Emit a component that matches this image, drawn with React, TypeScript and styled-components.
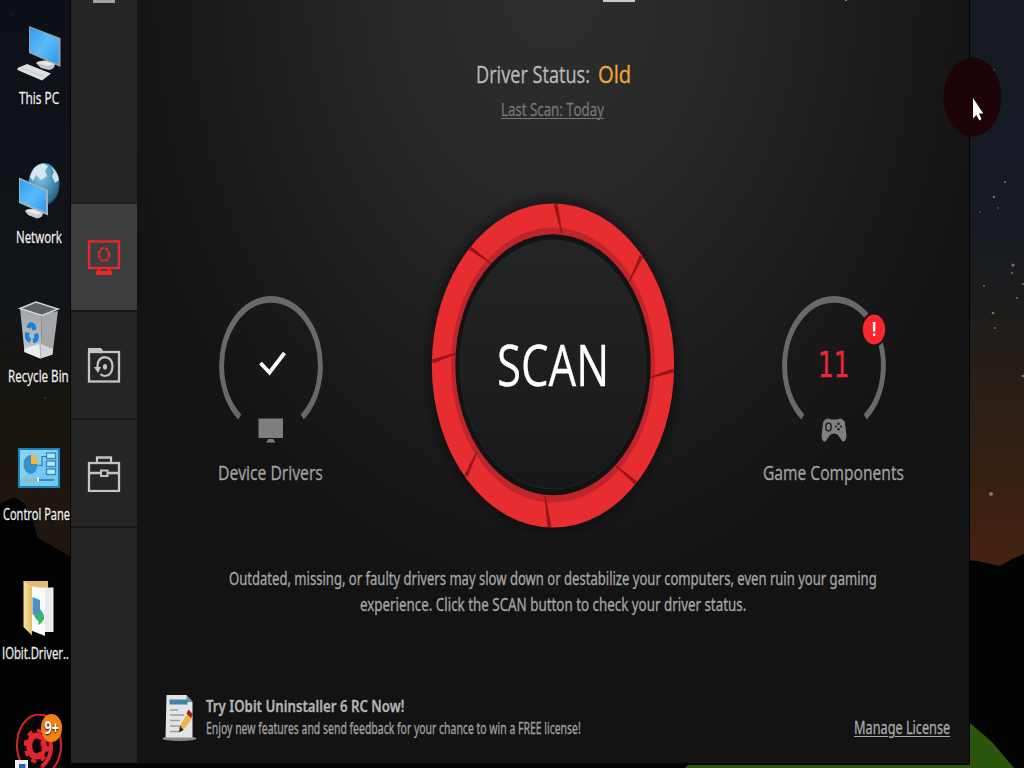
import React, { useLayoutEffect, useRef, useState } from "react";
import styled, { createGlobalStyle } from "styled-components";

const Global = createGlobalStyle`
  html, body { margin: 0; padding: 0; background: #000; overflow: hidden; }
  * { box-sizing: border-box; }
`;

const segoe = `"Open Sans", "Noto Sans", sans-serif`;
const tahoma = `"Noto Sans", "Open Sans", sans-serif`;
const verdana = `"DejaVu Sans", sans-serif`;

/* ---------- condensed text ---------- */

const FitBox = styled.span<{ $width: number; $size: number; $line: number; $color: string; $font?: string; $weight?: number }>`
  display: block;
  flex: none;
  width: ${(p) => p.$width}px;
  height: ${(p) => p.$line}px;
  line-height: ${(p) => p.$line}px;
  font-size: ${(p) => p.$size}px;
  font-family: ${(p) => p.$font || segoe};
  font-weight: ${(p) => p.$weight || 400};
  color: ${(p) => p.$color};
  -webkit-text-stroke: 0.3px currentColor;
  white-space: nowrap;
`;

const FitInner = styled.span<{ $underline?: boolean }>`
  display: inline-block;
  transform-origin: 0 50%;
  text-decoration: ${(p) => (p.$underline ? "underline" : "none")};
  text-decoration-thickness: 1px;
  text-underline-offset: 2px;
`;

type FitProps = {
  width: number;
  size: number;
  line: number;
  color: string;
  font?: string;
  weight?: number;
  underline?: boolean;
  children: string;
};

function Fit({ width, size, line, color, font, weight, underline, children }: FitProps) {
  const ref = useRef<HTMLSpanElement>(null);
  const [scale, setScale] = useState(0.75);
  useLayoutEffect(() => {
    if (ref.current) setScale(width / ref.current.offsetWidth);
  }, [width, children]);
  return (
    <FitBox $width={width} $size={size} $line={line} $color={color} $font={font} $weight={weight}>
      <FitInner ref={ref} $underline={underline} style={{ transform: `scaleX(${scale})` }}>
        {children}
      </FitInner>
    </FitBox>
  );
}

/* ---------- desktop ---------- */

const Desktop = styled.div`
  position: relative;
  width: 1024px;
  height: 768px;
  overflow: hidden;
  display: flex;
  background: #000;
`;

const Wallpaper = styled.svg`
  position: absolute;
  inset: 0;
`;

const IconColumn = styled.div`
  position: relative;
  width: 70px;
  height: 768px;
  flex: none;
  padding-top: 20px;
  overflow: hidden;
`;

const Shortcut = styled.div`
  height: 138.75px;
  width: 78px;
  display: flex;
  flex-direction: column;
  text-shadow: 0 1px 2px #000;
`;

const ShortcutLabel = styled.div<{ $left: number }>`
  padding-left: ${(p) => p.$left}px;
`;

const ShortcutArt = styled.svg`
  display: block;
  flex: none;
  width: 78px;
  height: 67px;
`;

const shortcutDefs = (
  <defs>
    <linearGradient id="screen" x1="0" y1="0" x2="1" y2="1">
      <stop offset="0" stopColor="#2f9df0" />
      <stop offset=".5" stopColor="#5bbcfb" />
      <stop offset="1" stopColor="#2b97ee" />
    </linearGradient>
    <radialGradient id="globe" cx=".4" cy=".3" r=".8">
      <stop offset="0" stopColor="#8cc7de" />
      <stop offset=".6" stopColor="#3d87a8" />
      <stop offset="1" stopColor="#1d4d68" />
    </radialGradient>
    <linearGradient id="binL" x1="0" y1="0" x2="0" y2="1">
      <stop offset="0" stopColor="#a2a5a8" />
      <stop offset=".7" stopColor="#b9bcc0" />
      <stop offset="1" stopColor="#e4e5e7" />
    </linearGradient>
    <linearGradient id="folder" x1="0" y1="0" x2="1" y2="0">
      <stop offset="0" stopColor="#f7e3a4" />
      <stop offset="1" stopColor="#e2bf66" />
    </linearGradient>
  </defs>
);

const ThisPcArt = () => (
  <ShortcutArt viewBox="0 0 78 67">
    {shortcutDefs}
    <path d="M29 6 L60.500 18 V47 L29 33Z" fill="#8fa3b0" />
    <path d="M30 7.500 L58.500 19 V44 L30 32Z" fill="url(#screen)" />
    <path d="M36 43 Q38 40 46 40.500 L55 44 Q55 49 49 50 L41 48Z" fill="#c3c6c9" />
    <path d="M36 43 L46 41 L54 44 L48 46Z" fill="#e6e7e9" />
    <path d="M17.500 48 L27 44 L51 53.500 L42 60.500 L17.500 50Z" fill="#dcdee0" />
    <path d="M22 48 L45 57" stroke="#c6c9cc" strokeWidth="1" />
  </ShortcutArt>
);

const NetworkArt = () => (
  <ShortcutArt viewBox="0 0 78 67">
    <ellipse cx="44" cy="25" rx="15.500" ry="21" fill="url(#globe)" />
    <path d="M30 18 Q33 6 43 4.500 L48 7 L45 12 L47 17 L41 21 L36 16 L33 22Z" fill="#d5e7ee" />
    <path d="M51 8 Q58 13 59 21 L55 24 L52 17 L54 13Z" fill="#cfe4ec" />
    <path d="M19 18.500 L48 31 V56.500 L19 44Z" fill="#9fb3bf" />
    <path d="M20 20.500 L46 32 V53 L20 42.500Z" fill="url(#screen)" />
    <path d="M25 52 Q27 49 34 50 L43 54 Q43 58.500 37 59.500 L28 56Z" fill="#c9cbce" />
    <path d="M26 52 L34 50.500 L42 54 L36 55.500Z" fill="#ececee" />
  </ShortcutArt>
);

const RecycleArt = () => (
  <ShortcutArt viewBox="0 0 78 67">
    <path d="M20 10.500 L42 16 L40.500 60.500 L24.500 54Z" fill="url(#binL)" />
    <path d="M42 16 L58 13 L52.500 56.500 L40.500 60.500Z" fill="#a4a6a9" />
    <path d="M24.300 51 L39 46 L40.500 60.500 L24.500 54Z" fill="#ebeced" />
    <path d="M41 46 L53 51 L52.500 56.500 L40.500 60.500Z" fill="#d2d4d6" />
    <path d="M20 10.500 L36 4 L58 11 L42 17.500Z" fill="#5d6062" stroke="#d2d4d6" strokeWidth="1.500" />
    <g fill="none" stroke="#1a80d8" strokeWidth="4.500">
      <path d="M28.500 30 Q30 24 33.500 28 L34.500 32" />
      <path d="M36 35.500 Q38 42.500 33 43" />
      <path d="M30.500 42.500 Q25.500 41 27.500 34.500" />
    </g>
  </ShortcutArt>
);

const ControlArt = () => (
  <ShortcutArt viewBox="0 0 78 67">
    <rect x="18" y="12" width="42" height="40" fill="#1f7fb8" />
    <rect x="20" y="14" width="38" height="36" fill="#72c8f2" />
    <path d="M20 14 H58 L20 44Z" fill="#92d8f7" opacity=".6" />
    <ellipse cx="30.500" cy="28.500" rx="7" ry="9.500" fill="#3c8ec6" />
    <path d="M31 28 V18 Q38 20 38 28Z" fill="#f5b43c" />
    <path d="M38 29.500 H42 V20.500 H46" fill="none" stroke="#2f7fae" strokeWidth="1.200" />
    <g fill="#b2e6fb" stroke="#2f86b8" strokeWidth="1.300">
      <rect x="46.500" y="17" width="9" height="5.500" />
      <rect x="46.500" y="25" width="9" height="5.500" />
      <rect x="46.500" y="33" width="9" height="5.500" />
    </g>
    <path d="M24 44 H36" stroke="#b6b377" strokeWidth="2" />
    <path d="M36.500 44 H54" stroke="#3588b7" strokeWidth="2" />
    <rect x="37" y="41.500" width="2" height="4" fill="#e9f8ff" />
  </ShortcutArt>
);

const FolderArt = () => (
  <ShortcutArt viewBox="0 0 78 67">
    <path d="M23.500 6 H48 V50 H32Z" fill="#dfbf6c" />
    <path d="M38 12.500 H53.500 V57 H38Z" fill="#e9eaec" />
    <path d="M31 11 L45 14 V61 L30 55Z" fill="#fafafa" />
    <path d="M32.500 22 L40 25 V43 L32.500 39Z" fill="#4b93c4" />
    <path d="M33 35 Q36 42 40 41 V34 Q45 40 44 44 Q42 48 38.500 50 V46 Q34 44 33 35Z" fill="#38b76a" />
    <path d="M23.500 6 L32 12 V60.500 L23.500 52Z" fill="url(#folder)" />
  </ShortcutArt>
);

const BoosterArt = () => (
  <ShortcutArt viewBox="0 0 78 67">
    <ellipse cx="39" cy="31" rx="22" ry="30.500" fill="#0b0606" stroke="#d8232b" strokeWidth="2" />
    <g fill="none" stroke="#e0272f">
      <ellipse cx="36.500" cy="32" rx="7.300" ry="10.500" strokeWidth="6" />
      <ellipse cx="36.500" cy="32" rx="11" ry="15.500" strokeWidth="3.500" strokeDasharray="5.500 5" />
      <path d="M50 26 Q54 42 41.500 53" strokeWidth="4" />
    </g>
    <path d="M41 27.500 Q36.500 24 34.500 31 Q35 39 40.500 36.500 V32" fill="none" stroke="#0b0606" strokeWidth="2.200" />
    <ellipse cx="51.500" cy="14" rx="10.500" ry="14" fill="#f47f12" />
    <text x="44.500" y="20" textLength="14.500" lengthAdjust="spacingAndGlyphs" fontFamily="Open Sans, sans-serif" fontWeight="700" fontSize="17" fill="#fff">9+</text>
    <rect x="15" y="46" width="13" height="20" fill="#f2f2f2" />
    <path d="M19 58 V50 H25.500 V58Z" fill="#2860b0" />
  </ShortcutArt>
);

/* ---------- application window ---------- */

const AppWindow = styled.div`
  position: relative;
  flex: none;
  width: 900px;
  height: 765px;
  display: flex;
  border: solid #050505;
  border-width: 0 1px 2px 1px;
`;

const Sidebar = styled.div`
  width: 66px;
  flex: none;
  display: flex;
  flex-direction: column;
  background: #252525;
`;

const SidebarTop = styled.div`
  height: 202px;
  padding-left: 22px;
`;

const MenuStub = styled.div`
  width: 22px;
  height: 3px;
  background: #a3a3a3;
`;

const NavItem = styled.div<{ $active?: boolean }>`
  height: 108px;
  display: flex;
  align-items: center;
  justify-content: center;
  border-top: 2px solid ${(p) => (p.$active ? "#1d1d1d" : "#171717")};
  background: ${(p) => (p.$active ? "#3e3e3e" : "#252525")};
`;

const SidebarRest = styled.div`
  flex: 1;
  border-top: 2px solid #171717;
`;

const Main = styled.div`
  flex: 1;
  display: flex;
  flex-direction: column;
  background: radial-gradient(ellipse 460px 640px at 50% -20px, #2e2e2e 0%, #282828 35%, #1b1b1b 72%, #131313 100%);
`;

const Header = styled.div`
  height: 190px;
  display: flex;
  flex-direction: column;
  align-items: center;
`;

const TopBar = styled.div`
  width: 100%;
  height: 59px;
  display: flex;
  padding-left: 466px;
`;

const TabMark = styled.div`
  width: 32px;
  height: 2px;
  background: #c9c9c9;
`;

const TopTick = styled.div`
  width: 2px;
  height: 1px;
  margin-left: 210px;
  background: #8a8a8a;
`;

const StatusLine = styled.div`
  display: flex;
  gap: 8px;
  margin-bottom: 8px;
`;

const LastScan = styled.div`
  padding-right: 2px;
`;

const Stage = styled.div`
  height: 350px;
  display: grid;
  grid-template-columns: 269px 294px 269px;
`;

const Dial = styled.div`
  display: grid;
  place-items: center;
  > * { grid-area: 1 / 1; }
`;

const ScanLabel = styled.div`
  padding-bottom: 3px;
`;

const Gauge = styled.div`
  display: flex;
  flex-direction: column;
  align-items: center;
  padding: 100px 2px 0 0;
`;

const GaugeFace = styled.div`
  display: grid;
  justify-items: center;
  > * { grid-area: 1 / 1; }
`;

const GaugeCount = styled.div`
  padding-top: 54px;
`;

const Description = styled.div`
  height: 150px;
  padding: 26px 1px 0 0;
  display: flex;
  flex-direction: column;
  align-items: center;
`;

const Footer = styled.div`
  flex: 1;
  display: flex;
  padding: 4px 19px 0 25px;
`;

const NoteArt = styled.svg`
  flex: none;
  width: 36px;
  height: 50px;
`;

const Promo = styled.div`
  flex: 1;
  margin-left: 8px;
`;

const ManageLink = styled.div`
  padding-top: 21px;
`;

const Pointer = styled.svg`
  position: absolute;
  left: 940px;
  top: 54px;
`;

const wedges = [
  [555.5, 204, 562, 234],
  [641.5, 256, 629.5, 281],
  [674, 370.5, 650, 377.500],
  [636, 483, 616, 466],
  [549.5, 527, 545, 496],
  [466, 476, 477, 451.500],
  [432.5, 361.5, 455.5, 353.500],
  [470, 248, 490.500, 263],
];

function ScanRing() {
  return (
    <svg width="294" height="350" viewBox="406 190 294 350">
      <defs>
        <linearGradient id="face" x1="0" y1="0" x2="0" y2="1">
          <stop offset="0" stopColor="#242525" />
          <stop offset="1" stopColor="#181818" />
        </linearGradient>
        <radialGradient id="halo">
          <stop offset=".88" stopColor="#0c0c0c" stopOpacity=".75" />
          <stop offset="1" stopColor="#0c0c0c" stopOpacity="0" />
        </radialGradient>
        <clipPath id="ring">
          <ellipse cx="553" cy="365.500" rx="121.200" ry="162" />
        </clipPath>
      </defs>
      <ellipse cx="553" cy="365.500" rx="132" ry="176" fill="url(#halo)" />
      <g clipPath="url(#ring)">
        <rect x="430" y="200" width="246" height="330" fill="#e82d30" />
        <ellipse cx="553" cy="365" rx="102" ry="137.500" fill="#bf252a" />
        {wedges.map(([ox, oy, ix, iy], i) => {
          const len = Math.hypot(ix - ox, iy - oy);
          const nx = (-(iy - oy) / len) * 2;
          const ny = ((ix - ox) / len) * 2;
          return <polygon key={i} points={`${ox + nx},${oy + ny} ${ox - nx},${oy - ny} ${ix - nx / 3},${iy - ny / 3} ${ix + nx / 3},${iy + ny / 3}`} fill="#9a1519" />;
        })}
      </g>
      <ellipse cx="553" cy="364.800" rx="97.700" ry="130.500" fill="#121313" />
      <ellipse cx="553" cy="364.500" rx="93" ry="124.500" fill="url(#face)" stroke="#222425" strokeWidth="1" />
    </svg>
  );
}

const GaugeArc = () => (
  <g transform="translate(55 76) scale(.745 1)" fill="none" stroke="#696969" strokeWidth="6.600">
    <path d="M-42 51 A66.300 66.300 0 1 1 42 51" />
  </g>
);

function DeviceGauge() {
  return (
    <svg width="110" height="160" viewBox="0 0 110 160">
      <GaugeArc />
      <path d="M44.500 73 L53.500 82.500 L68.500 63" fill="none" stroke="#fff" strokeWidth="3.800" />
      <rect x="42.500" y="128.500" width="24.500" height="19.500" fill="#7e7e7e" />
      <path d="M52.500 149 H57 L59.500 152.500 H50Z" fill="#7e7e7e" />
    </svg>
  );
}

function GameGauge() {
  return (
    <svg width="110" height="160" viewBox="0 0 110 160">
      <GaugeArc />
      <ellipse cx="95" cy="39.500" rx="13" ry="17.500" fill="#161616" />
      <ellipse cx="95" cy="39.500" rx="11.200" ry="15" fill="#f9262e" />
      <path d="M93.800 32 H96.500 L96.300 41.500 H94Z M94 43.500 H96.300 V46 H94Z" fill="#fff" />
      <path d="M44 133 Q45 129 49 128.500 L52 129.500 H58 L61 128.500 Q65 129 66 133 L67.500 146 Q67 152 63.500 151.500 L59 145 Q55 142 51 145 L46.500 151.500 Q43 152 42.500 146Z" fill="#808080" />
      <ellipse cx="49.500" cy="137" rx="2.700" ry="3.900" fill="none" stroke="#222" strokeWidth="1.500" />
      <g fill="#222">
        <circle cx="59.500" cy="133.800" r="1.300" />
        <circle cx="59.500" cy="139.200" r="1.300" />
        <circle cx="57" cy="136.500" r="1.100" />
        <circle cx="62" cy="136.500" r="1.100" />
      </g>
    </svg>
  );
}

function MonitorIcon() {
  return (
    <svg width="34" height="38" viewBox="0 0 34 38" fill="none" stroke="#e2292e">
      <rect x="2" y="3.500" width="30" height="26.500" strokeWidth="2.400" />
      <path d="M9 33 H25 V37 H9Z" fill="#e2292e" stroke="none" />
      <path d="M12 30.500 V34 M22 30.500 V34" strokeWidth="3" />
      <ellipse cx="17" cy="16.500" rx="5" ry="6.500" strokeWidth="2.200" strokeDasharray="3.700 0.860" />
    </svg>
  );
}

function RestoreIcon() {
  return (
    <svg width="34" height="38" viewBox="0 0 34 38" fill="none" stroke="#c4c4c4">
      <rect x="2" y="6" width="30" height="29.500" strokeWidth="2.300" />
      <path d="M1 4 H13 L15 6.500" strokeWidth="4" />
      <path d="M10.500 22 Q10 11.500 18 11.200 Q25.500 12 25.500 20.500 Q25 29.500 18 30 Q15.500 30 13.500 28" strokeWidth="2.200" />
      <path d="M7 21 H14 L11 27Z" fill="#c4c4c4" stroke="none" />
      <ellipse cx="18" cy="20.700" rx="2.100" ry="2.800" fill="#c4c4c4" stroke="none" />
    </svg>
  );
}

function ToolboxIcon() {
  return (
    <svg width="34" height="38" viewBox="0 0 34 38" fill="none" stroke="#c4c4c4" strokeWidth="2.300">
      <rect x="2" y="9" width="30" height="28" />
      <path d="M10 9 V3.500 H24 V9" />
      <path d="M2 19 H14 M20.500 19 H32" />
      <rect x="14" y="16.500" width="6.500" height="5.500" strokeWidth="2" />
    </svg>
  );
}

function NoteIcon() {
  return (
    <NoteArt viewBox="0 0 36 50">
      <ellipse cx="17.500" cy="44.500" rx="17" ry="2.600" fill="#8b8b8b" />
      <path d="M4.500 1 H24.500 L30.500 8 V43.500 H3.500Z" fill="#e3e4e5" />
      <path d="M24.500 1 L30.500 8 H24.500Z" fill="#6c8ea3" />
      <rect x="7.500" y="5.500" width="18" height="5" fill="#3d84a5" />
      <path d="M8 16 H16 M8 21 H22 M8 26.500 H18 M8 32 H18 M8 37.500 H17" stroke="#9b9da0" strokeWidth="1.500" />
      <path d="M26 18.500 L30.500 23.500 L21.500 36 L18 31.500Z" fill="#eeb640" />
      <path d="M24.500 19.500 L26.500 15.500 L31 20.500 L29 24Z" fill="#9c1f26" />
      <path d="M18 31.500 L21.500 36 L17 38.500Z" fill="#2b2118" />
    </NoteArt>
  );
}

function DesktopWallpaper() {
  const stars = [
    [1005, 182, 1], [994, 197, 1.2], [998, 208, 0.8], [1013, 265, 1.5], [1012, 273, 1], [1023, 284, 1], [984, 286, 0.9],
    [1017, 298, 0.9], [993, 313, 1.3], [995, 328, 1], [1023, 376, 1.2], [991, 494, 2], [980, 212, 0.7], [994, 70, 0.8],
    [12, 14, 0.7], [25, 40, 0.6], [48, 10, 0.6], [8, 122, 0.6], [40, 140, 0.6], [62, 130, 0.6], [14, 264, 0.6], [45, 398, 1], [10, 416, 0.8],
  ];
  return (
    <Wallpaper width="1024" height="768" viewBox="0 0 1024 768">
      <defs>
        <linearGradient id="skyL" x1="0" y1="0" x2="0" y2="1">
          <stop offset="0" stopColor="#0d1016" />
          <stop offset=".38" stopColor="#11151a" />
          <stop offset=".52" stopColor="#17150f" />
          <stop offset=".66" stopColor="#1f160f" />
          <stop offset="1" stopColor="#1f160f" />
        </linearGradient>
        <linearGradient id="skyR" x1="0" y1="0" x2="0" y2="1">
          <stop offset="0" stopColor="#151a22" />
          <stop offset=".2" stopColor="#151a24" />
          <stop offset=".33" stopColor="#181b20" />
          <stop offset=".43" stopColor="#201d1a" />
          <stop offset=".6" stopColor="#332013" />
          <stop offset=".74" stopColor="#442212" />
        </linearGradient>
      </defs>
      <rect width="512" height="768" fill="url(#skyL)" />
      <rect x="512" width="512" height="768" fill="url(#skyR)" />
      {stars.map(([x, y, r], i) => (
        <circle key={i} cx={x} cy={y} r={r} fill={x > 500 ? "#a08f58" : "#3c4146"} opacity=".8" />
      ))}
      <path d="M0 504 L8 500 L14 497 L24 503 L32 520 L38 538 L52 546 L70 556 V768 H0Z" fill="#020202" />
      <path d="M70 560 H960 L978 561 L1000 566 L1012 559 L1024 554 V768 H70Z" fill="#030303" />
      <path d="M969 722 L992 742 L1014 768 H685 L689 764 H969Z" fill="#2c560c" />
    </Wallpaper>
  );
}

const shortcuts = [
  { label: "This PC", left: 19, width: 40, Art: ThisPcArt },
  { label: "Network", left: 16, width: 46, Art: NetworkArt },
  { label: "Recycle Bin", left: 8, width: 61, Art: RecycleArt },
  { label: "Control Pane", left: 3, width: 67, Art: ControlArt },
  { label: "IObit.Driver..", left: 2, width: 67, Art: FolderArt },
  { label: "", left: 0, width: 0, Art: BoosterArt },
];

export default function App() {
  return (
    <>
      <Global />
      <Desktop>
        <DesktopWallpaper />
        <IconColumn>
          {shortcuts.map(({ label, left, width, Art }, i) => (
            <Shortcut key={i}>
              <Art />
              {label && (
                <ShortcutLabel $left={left}>
                  <Fit width={width} size={16} line={22} color="#f2f2f2">
                    {label}
                  </Fit>
                </ShortcutLabel>
              )}
            </Shortcut>
          ))}
        </IconColumn>
        <AppWindow>
          <Sidebar>
            <SidebarTop>
              <MenuStub />
            </SidebarTop>
            <NavItem $active>
              <MonitorIcon />
            </NavItem>
            <NavItem>
              <RestoreIcon />
            </NavItem>
            <NavItem>
              <ToolboxIcon />
            </NavItem>
            <SidebarRest />
          </Sidebar>
          <Main>
            <Header>
              <TopBar>
                <TabMark />
                <TopTick />
              </TopBar>
              <StatusLine>
                <Fit width={114} size={24.5} line={30} color="#b9b9b9">Driver Status:</Fit>
                <Fit width={33} size={24.5} line={30} color="#f0a63c">Old</Fit>
              </StatusLine>
              <LastScan>
                <Fit width={103} size={18} line={24} color="#77787a" underline>Last Scan: Today</Fit>
              </LastScan>
            </Header>
            <Stage>
              <Gauge>
                <DeviceGauge />
                <Fit width={105} size={20.5} line={44} color="#a3a3a3">Device Drivers</Fit>
              </Gauge>
              <Dial>
                <ScanRing />
                <ScanLabel>
                  <Fit width={112} size={57} line={70} color="#ffffff">SCAN</Fit>
                </ScanLabel>
              </Dial>
              <Gauge>
                <GaugeFace>
                  <GameGauge />
                  <GaugeCount>
                    <Fit width={32} size={35} line={42} color="#ee2637" font={verdana}>11</Fit>
                  </GaugeCount>
                </GaugeFace>
                <Fit width={141} size={20.5} line={44} color="#a3a3a3">Game Components</Fit>
              </Gauge>
            </Stage>
            <Description>
              <Fit width={648} size={18} line={25} color="#a6a6a6" font={tahoma}>
                Outdated, missing, or faulty drivers may slow down or destabilize your computers, even ruin your gaming
              </Fit>
              <Fit width={386} size={18} line={26} color="#a6a6a6" font={tahoma}>
                experience. Click the SCAN button to check your driver status.
              </Fit>
            </Description>
            <Footer>
              <NoteIcon />
              <Promo>
                <Fit width={198} size={16.5} line={23} color="#b4b4b4" font={tahoma} weight={600}>
                  Try IObit Uninstaller 6 RC Now!
                </Fit>
                <Fit width={375} size={15.5} line={22} color="#a0a0a0" font={tahoma}>
                  Enjoy new features and send feedback for your chance to win a FREE license!
                </Fit>
              </Promo>
              <ManageLink>
                <Fit width={96} size={18} line={24} color="#a9a9a9" font={tahoma} underline>Manage License</Fit>
              </ManageLink>
            </Footer>
          </Main>
        </AppWindow>
        <Pointer width="64" height="86" viewBox="940 54 64 86">
          <ellipse cx="972.500" cy="97" rx="29" ry="39.500" fill="#1c0308" opacity=".95" />
          <path d="M973 98 V118.500 L976.300 115 L979.300 120.500 L981.500 119 L979 113.500 H983.300Z" fill="#fff" />
        </Pointer>
      </Desktop>
    </>
  );
}
